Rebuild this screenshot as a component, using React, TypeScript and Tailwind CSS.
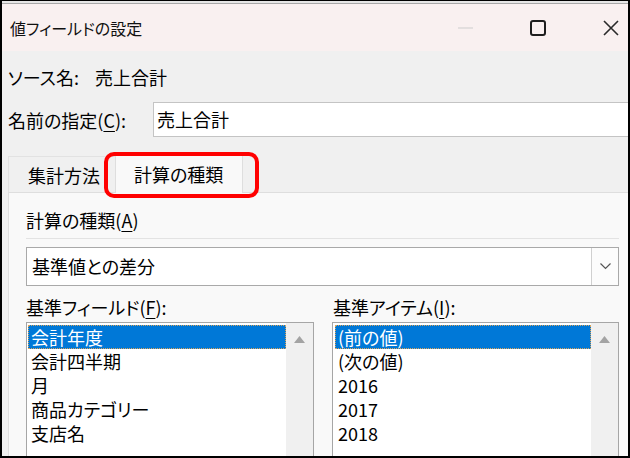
import React from 'react'

const font = "font-['Noto_Sans_CJK_JP','Noto_Sans',sans-serif] [font-feature-settings:'palt']"

function ListBox({ items, width, padLeft }: { items: string[]; width: string; padLeft: string }) {
  return (
    <div className={`${width} h-[200px] flex border border-[#a6a6a6] bg-white`}>
      <div className={`flex-1 flex flex-col pt-[2px] ${padLeft}`}>
        {items.map((item, i) => (
          <div
            key={item}
            className={
              i === 0
                ? 'h-[24px] leading-[22px] pl-[2px] bg-[#0078d7] text-white border border-dotted border-[#d9a45c]'
                : 'h-[24px] leading-[24px] pl-[3px] text-black'
            }
          >
            {item}
          </div>
        ))}
      </div>
      {/* scrollbar */}
      <div className="w-[27px] bg-[#f0f0f0] flex justify-center pt-[13px]">
        <svg width="11" height="7" viewBox="0 0 11 7">
          <polygon points="5.5,0 11,7 0,7" fill="#a3a3a3" />
        </svg>
      </div>
    </div>
  )
}

export default function App() {
  return (
    <div className={`w-[630px] h-[458px] overflow-hidden bg-black pt-[1px] px-[2px] pb-[2px] ${font}`}>
      <div className="h-full flex flex-col bg-[#f0f0f0] overflow-hidden">
        {/* top strip */}
        <div className="h-[3px] bg-[#e6e6e6] border-b border-[#a8a8a8] shrink-0" />

        {/* Title bar */}
        <div className="h-[47px] shrink-0 bg-[#f9f0f0] flex items-center pl-[8px]">
          <span className="text-[16px] leading-[20px] text-[#111]">値フィールドの設定</span>
          <div className="ml-auto flex items-center gap-[57px] pr-[9px]">
            <svg width="15" height="16" viewBox="0 0 15 16">
              <line x1="0" y1="8" x2="15" y2="8" stroke="#cdcdcd" strokeWidth="1" />
            </svg>
            <svg width="16" height="16" viewBox="0 0 16 16">
              <rect x="1" y="1" width="14" height="14" rx="2" fill="none" stroke="#1e1e1e" strokeWidth="2" />
            </svg>
            <svg width="16" height="16" viewBox="0 0 16 16">
              <path d="M1 1 L15 15 M15 1 L1 15" stroke="#2a2a2a" strokeWidth="1.6" />
            </svg>
          </div>
        </div>

        {/* Body */}
        <div className="flex-1 flex flex-col pl-[6px] text-[18px] text-black">
          <div className="flex h-[24px] leading-[24px] mt-[14px]">
            <span className="w-[87px]">ソース名:</span>
            <span>売上合計</span>
          </div>

          <div className="flex items-center h-[35px] mt-[13px]">
            <span className="w-[145px] leading-[24px]">
              名前の指定(<span className="underline underline-offset-[3px]">C</span>):
            </span>
            <div className="flex-1 h-[35px] bg-white border-y border-l border-[#c4c4c4] flex items-center pl-[3px]">
              売上合計
            </div>
          </div>

          {/* Tabs */}
          <div className="relative flex items-end h-[38px] mt-[17px]">
            <div className="w-[107px] h-[36px] flex items-center pl-[19px] border-t border-l border-[#e2e2e2] bg-[#f0f0f0] leading-[24px]">
              集計方法
            </div>
            <div className="relative z-10 -mb-px w-[128px] h-[39px] flex items-center pl-[18px] bg-[#f9f9f9] border-x border-t border-[#dedede] leading-[24px]">
              計算の種類
            </div>
            <div className="absolute z-20 left-[96px] top-[-2px] w-[155px] h-[46px] border-4 border-[#ff0000] rounded-[10px]" />
          </div>

          {/* Tab panel */}
          <div className="flex-1 bg-[#f9f9f9] border-t border-l border-[#dedede] pl-[17px] pr-[9px] pt-[15px] flex flex-col">
            <div className="leading-[24px] h-[24px]">
              計算の種類(<span className="underline underline-offset-[3px]">A</span>)
            </div>
            <div className="h-px bg-[#e3e3e3] mt-[6px]" />
            <div className="mt-[8px] h-[39px] flex bg-white border border-[#a9a9a9]">
              <div className="flex-1 flex items-center pl-[5px]">基準値との差分</div>
              <div className="w-[27px] flex items-center justify-center border-l border-[#d0d0d0] bg-[#fcfcfc]">
                <svg width="11" height="7" viewBox="0 0 11 7">
                  <path d="M0.5 0.5 L5.5 5.5 L10.5 0.5" fill="none" stroke="#555" strokeWidth="1.2" />
                </svg>
              </div>
            </div>

            <div className="flex gap-[18px] mt-[9px]">
              <div className="w-[288px] flex flex-col">
                <div className="h-[24px] leading-[24px]">
                  基準フィールド(<span className="underline underline-offset-[3px]">F</span>):
                </div>
                <div className="mt-[3px]">
                  <ListBox
                    width="w-[288px]"
                    padLeft="pl-[1px]"
                    items={['会計年度', '会計四半期', '月', '商品カテゴリー', '支店名']}
                  />
                </div>
              </div>
              <div className="flex-1 flex flex-col">
                <div className="h-[24px] leading-[24px] pl-[1px]">
                  基準アイテム(<span className="underline underline-offset-[3px]">I</span>):
                </div>
                <div className="mt-[3px]">
                  <ListBox
                    width="w-full"
                    padLeft="pl-[2px]"
                    items={['(前の値)', '(次の値)', '2016', '2017', '2018']}
                  />
                </div>
              </div>
            </div>
          </div>
        </div>
      </div>
    </div>
  )
}
